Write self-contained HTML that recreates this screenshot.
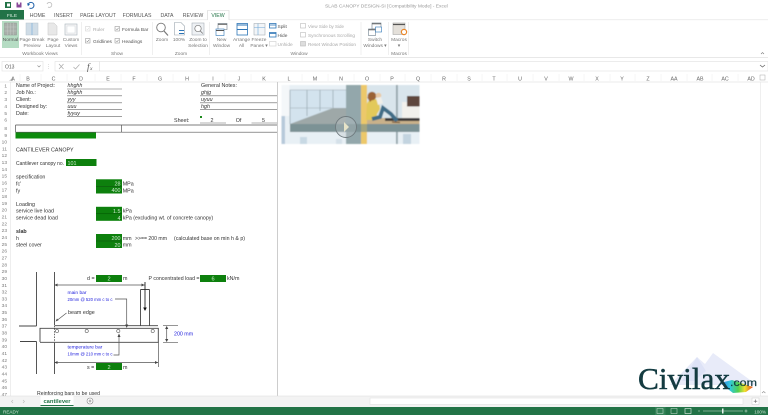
<!DOCTYPE html>
<html><head><meta charset="utf-8"><title>SLAB CANOPY DESIGN</title>
<style>
html,body{margin:0;padding:0;background:#fff;width:768px;height:415px;overflow:hidden}
svg{display:block;font-family:"Liberation Sans",sans-serif}
.rb{font-size:4.8px;fill:#555}
.rg{font-size:4.8px;fill:#aaa}
.gl{font-size:4.8px;fill:#777;text-anchor:middle}
.tab{font-size:5.2px;fill:#555;text-anchor:middle}
.c{font-size:5.3px;fill:#666;text-anchor:middle}
.r{font-size:4.8px;fill:#777;text-anchor:end}
.t{font-size:5.35px;fill:#333}
.i{font-size:5.35px;fill:#333;font-style:italic}
.w{font-size:5.4px;fill:#cfe8cf;text-anchor:end}
.wc{font-size:5.6px;fill:#cfe8cf;text-anchor:middle}
.b{font-size:4.9px;fill:#2222dd}
.ln{stroke:#555;stroke-width:.7;fill:none}
.lg{stroke:#444;stroke-width:.9;fill:none}
.blu{stroke:#2e75b6;stroke-width:.8;fill:#fff}
</style></head><body>
<svg width="768" height="415" viewBox="0 0 768 415" xmlns="http://www.w3.org/2000/svg">
<defs>
<linearGradient id="rain" x1="0" x2="1" y1="0" y2="0"><stop offset="0" stop-color="#3a6fe0"/><stop offset=".3" stop-color="#30c8e0"/><stop offset=".55" stop-color="#50d050"/><stop offset=".75" stop-color="#f0e030"/><stop offset="1" stop-color="#e84a20"/></linearGradient>
<filter id="s"><feGaussianBlur stdDeviation=".22"/></filter>
<filter id="s2"><feGaussianBlur stdDeviation=".5"/></filter>
<filter id="s3"><feGaussianBlur stdDeviation=".3"/></filter>
</defs>
<rect width="768" height="415" fill="#fff"/>
<g filter="url(#s)">
<!-- title bar -->
<rect x="5" y="2" width="6" height="6" fill="#217346"/><rect x="7" y="3.500" width="3" height="3" fill="#fff"/>
<path d="M16.500 2.500h5v5h-5z" fill="#8a4a9a"/><rect x="18" y="2.500" width="2" height="2" fill="#eee"/>
<path d="M28 5.500a3 3 0 1 1 1.500 2.500" fill="none" stroke="#1f5fa8" stroke-width="1"/><path d="M27 3l1 3 2-1.500z" fill="#1f5fa8"/>
<path d="M48 7a2.500 2.500 0 1 0-1-3" fill="none" stroke="#bbb" stroke-width=".8"/>
<text x="325" y="7.500" font-size="4.900" fill="#999">SLAB CANOPY DESIGN-SI  [Compatibility Mode] - Excel</text>
<!-- tabs -->
<rect x="0" y="10" width="24" height="10" fill="#217346"/>
<text x="12" y="17" font-size="4.800" fill="#d8eadf" text-anchor="middle">FILE</text>
<text x="37.500" y="17" class="tab">HOME</text>
<text x="63.500" y="17" class="tab">INSERT</text>
<text x="98" y="17" class="tab">PAGE LAYOUT</text>
<text x="137" y="17" class="tab">FORMULAS</text>
<text x="167" y="17" class="tab">DATA</text>
<text x="193" y="17" class="tab">REVIEW</text>
<path d="M207.500 20V10.500H229V20" fill="#fff" stroke="#d4d4d4" stroke-width=".6"/>
<text x="218" y="17" font-size="5.200" fill="#217346" text-anchor="middle">VIEW</text>
<path d="M0 19.800H207.500M229 19.800H768" stroke="#e2e2e2" stroke-width=".6"/>
<!-- ribbon group separators -->
<path d="M81.500 22v33M152.500 22v33M209.500 22v33M361 22v33M388.500 22v33M408.500 22v33" stroke="#e4e4e4" stroke-width=".6"/>
<path d="M0 57.500H768" stroke="#e8e8e8" stroke-width="1"/>
<!-- normal -->
<rect x="2" y="21" width="17" height="27" fill="#b5dcc3"/>
<rect x="4.500" y="23" width="12" height="12" fill="#a8aea9" stroke="#8d9590" stroke-width=".5"/>
<path d="M7.500 23v12M10.500 23v12M13.500 23v12M4.500 27h12M4.500 31h12" stroke="#c8cfc9" stroke-width=".4"/>
<text x="10.500" y="41" class="gl" style="fill:#555">Normal</text>
<!-- page break -->
<rect x="26" y="23" width="12" height="12" fill="#cfdce6" stroke="#b8c4cc" stroke-width=".5"/>
<path d="M32 23v12" stroke="#5b9bd5" stroke-width=".5"/>
<text x="32" y="41" class="gl">Page Break</text><text x="32" y="47" class="gl">Preview</text>
<path d="M48 23h6l3 3v9h-9z" fill="#e8e8e8" stroke="#c5c5c5" stroke-width=".5"/>
<text x="53" y="41" class="gl">Page</text><text x="53" y="47" class="gl">Layout</text>
<rect x="65" y="24" width="12" height="11" fill="#f4f4f4" stroke="#a8b4bc" stroke-width=".6"/><rect x="67" y="26" width="8" height="7" fill="#fff" stroke="#c8d0d6" stroke-width=".4"/>
<text x="71" y="41" class="gl">Custom</text><text x="71" y="47" class="gl">Views</text>
<text x="40" y="55" class="gl">Workbook Views</text>
<!-- show -->
<rect x="85.500" y="26.500" width="4.500" height="4.500" fill="#fff" stroke="#ccc" stroke-width=".5"/><path d="M86.500 28.800l1 1 1.600-2" stroke="#ccc" stroke-width=".5" fill="none"/>
<text x="93" y="31" class="rg">Ruler</text>
<rect x="85.500" y="38.500" width="4.500" height="4.500" fill="#fff" stroke="#888" stroke-width=".5"/><path d="M86.500 40.800l1 1 1.600-2" stroke="#555" stroke-width=".5" fill="none"/>
<text x="93" y="43" class="rb">Gridlines</text>
<rect x="115" y="26.500" width="4.500" height="4.500" fill="#fff" stroke="#888" stroke-width=".5"/><path d="M116 28.800l1 1 1.600-2" stroke="#555" stroke-width=".5" fill="none"/>
<text x="122" y="31" class="rb">Formula Bar</text>
<rect x="115" y="38.500" width="4.500" height="4.500" fill="#fff" stroke="#888" stroke-width=".5"/><path d="M116 40.800l1 1 1.600-2" stroke="#555" stroke-width=".5" fill="none"/>
<text x="122" y="43" class="rb">Headings</text>
<text x="117" y="55" class="gl">Show</text>
<!-- zoom -->
<circle cx="161" cy="27.500" r="4.300" fill="#fff" stroke="#777" stroke-width=".9"/><path d="M164 31l4 4.500" stroke="#777" stroke-width="1.200"/>
<text x="162" y="41" class="gl">Zoom</text>
<path d="M174.500 22.500h6.500l3.500 3.500v9h-10z" fill="#fff" stroke="#9aa5ad" stroke-width=".6"/><path d="M179 30.500h5M179 33.500h5" stroke="#2e75b6" stroke-width="1"/>
<text x="179" y="41" class="gl">100%</text>
<rect x="192" y="23" width="12" height="12" fill="#eef1f4" stroke="#a8b0b6" stroke-width=".6"/><circle cx="198" cy="28.500" r="3.200" fill="#fff" stroke="#777" stroke-width=".7"/><path d="M200.300 31l2.500 2.500" stroke="#777" stroke-width=".8"/>
<text x="198" y="41" class="gl">Zoom to</text><text x="198" y="47" class="gl">Selection</text>
<text x="181" y="55" class="gl">Zoom</text>
<!-- window -->
<rect x="218" y="23.500" width="9" height="6" fill="#fff" stroke="#6f7f8c" stroke-width=".6"/><rect x="216" y="29" width="8" height="6.500" fill="#fff" stroke="#2e75b6" stroke-width=".6"/><path d="M216 30.500h8M218 24.300h9" stroke="#555" stroke-width="1"/>
<text x="221.500" y="41" class="gl">New</text><text x="221.500" y="47" class="gl">Window</text>
<rect x="237" y="23.500" width="10.500" height="11.500" class="blu"/><path d="M237 25h10.500M237 29.500h10.500" stroke="#2e75b6" stroke-width="1"/>
<text x="241.500" y="41" class="gl">Arrange</text><text x="241.500" y="47" class="gl">All</text>
<rect x="254" y="23.500" width="11" height="11.500" fill="#f2f5f8" stroke="#a8b0b6" stroke-width=".6"/><path d="M258 23.500v11.500M254 27.500h11" stroke="#6fa8d8" stroke-width=".6"/>
<text x="259" y="41" class="gl">Freeze</text><text x="259" y="47" class="gl">Panes ▾</text>
<rect x="269.500" y="23.500" width="6.500" height="4.500" class="blu"/><path d="M269.500 25h6.500" stroke="#2e75b6" stroke-width=".8"/>
<text x="277.500" y="27.800" class="rb">Split</text>
<rect x="269.500" y="32.500" width="6.500" height="4.500" class="blu"/><path d="M269.500 33.500h6.500" stroke="#2e75b6" stroke-width=".8"/>
<text x="277.500" y="37" class="rb">Hide</text>
<rect x="269.500" y="41.500" width="6.500" height="4.500" fill="#fff" stroke="#ccc" stroke-width=".6"/>
<text x="277.500" y="46" class="rg">Unhide</text>
<rect x="300.500" y="23.500" width="5" height="4.500" fill="#fff" stroke="#bbb" stroke-width=".6"/>
<text x="308" y="27.800" class="rg" textLength="36" lengthAdjust="spacingAndGlyphs">View Side by Side</text>
<rect x="300.500" y="32.500" width="5" height="4.500" fill="#fff" stroke="#bbb" stroke-width=".6"/>
<text x="308" y="37" class="rg" textLength="47" lengthAdjust="spacingAndGlyphs">Synchronous Scrolling</text>
<rect x="300.500" y="41.500" width="5" height="4.500" fill="#ddd" stroke="#bbb" stroke-width=".6"/>
<text x="308" y="46" class="rg" textLength="48" lengthAdjust="spacingAndGlyphs">Reset Window Position</text>
<text x="299" y="55" class="gl">Window</text>
<rect x="372" y="23" width="9" height="6" fill="#fff" stroke="#6f7f8c" stroke-width=".6"/><rect x="368.500" y="29" width="7" height="6.500" fill="#fff" stroke="#6f7f8c" stroke-width=".6"/><rect x="375.500" y="27" width="6" height="5" fill="#fff" stroke="#2e75b6" stroke-width=".6"/><path d="M372 23.800h9M368.500 29.800h7" stroke="#555" stroke-width=".8"/>
<text x="375" y="41" class="gl">Switch</text><text x="375" y="47" class="gl">Windows ▾</text>
<rect x="393" y="23" width="12" height="11.500" fill="#e4e0da" stroke="#a8a8a8" stroke-width=".6"/><path d="M393 24.500h12" stroke="#555" stroke-width="1.200"/><circle cx="404" cy="32" r="2.600" fill="#fff" stroke="#e8862a" stroke-width="1.200"/>
<text x="399" y="41" class="gl">Macros</text><text x="399" y="47" class="gl">▾</text>
<text x="399" y="55" class="gl">Macros</text>
<path d="M761 54l1.500-1.500 1.500 1.500" stroke="#777" stroke-width=".6" fill="none"/>
<!-- formula bar -->
<rect x="2" y="61.500" width="41" height="9.500" fill="#fff" stroke="#e0e0e0" stroke-width=".6"/>
<text x="5" y="68.500" font-size="5" fill="#555">O13</text>
<path d="M37.500 65.500l1.500 1.500 1.500-1.500" stroke="#888" stroke-width=".6" fill="none"/>
<path d="M48.500 64v.5M48.500 66v.5M48.500 68v.5" stroke="#aaa" stroke-width=".7"/>
<rect x="55" y="61.500" width="713" height="9.500" fill="#fff" stroke="#e0e0e0" stroke-width=".6"/>
<path d="M59 64l4.500 5M63.500 64l-4.500 5" stroke="#aaa" stroke-width=".7"/>
<path d="M73.500 67l2 2 4-4.500" stroke="#aaa" stroke-width=".7" fill="none"/>
<text x="87" y="70" font-family="Liberation Serif" font-style="italic" font-size="9" fill="#555">f</text><text x="90" y="70" font-family="Liberation Serif" font-style="italic" font-size="5.500" fill="#555">x</text>
<path d="M99.500 61.500v9.500" stroke="#ddd" stroke-width=".6"/>
<path d="M760 65l2.500 2 2.500-2" stroke="#666" stroke-width=".8" fill="none"/>
<!-- column header -->
<path d="M0 82H768" stroke="#d8d8d8" stroke-width=".6"/>
<path d="M9 81l4-4v4z" fill="#ccc"/>
<g>
<text x="13" y="80.500" class="c">A</text><text x="28" y="80.500" class="c">B</text><text x="53.500" y="80.500" class="c">C</text><text x="81" y="80.500" class="c">D</text><text x="108" y="80.500" class="c">E</text><text x="134" y="80.500" class="c">F</text><text x="160" y="80.500" class="c">G</text><text x="187" y="80.500" class="c">H</text><text x="213" y="80.500" class="c">I</text><text x="239" y="80.500" class="c">J</text><text x="264" y="80.500" class="c">K</text><text x="289" y="80.500" class="c">L</text><text x="315" y="80.500" class="c">M</text><text x="341" y="80.500" class="c">N</text><text x="367" y="80.500" class="c">O</text><text x="392" y="80.500" class="c">P</text><text x="418" y="80.500" class="c">Q</text><text x="444" y="80.500" class="c">R</text><text x="469" y="80.500" class="c">S</text><text x="494" y="80.500" class="c">T</text><text x="520" y="80.500" class="c">U</text><text x="546" y="80.500" class="c">V</text><text x="571" y="80.500" class="c">W</text><text x="597" y="80.500" class="c">X</text><text x="622" y="80.500" class="c">Y</text><text x="648" y="80.500" class="c">Z</text><text x="674" y="80.500" class="c">AA</text><text x="700" y="80.500" class="c">AB</text><text x="725" y="80.500" class="c">AC</text><text x="751" y="80.500" class="c">AD</text>
</g>
<path d="M20 74v7M41 74v7M67 74v7M95 74v7M121 74v7M147 74v7M173 74v7M199 74v7M225 74v7M251 74v7M302 74v7M328 74v7M354 74v7M380 74v7M405 74v7M431 74v7M457 74v7M482 74v7M507 74v7M533 74v7M559 74v7M584 74v7M610 74v7M635 74v7M661 74v7M687 74v7M712 74v7M738 74v7" stroke="#eee" stroke-width=".5"/>
<rect x="760" y="75" width="5" height="5" fill="#fff" stroke="#aaa" stroke-width=".5"/>
<!-- row numbers -->
<path d="M10.500 82V396" stroke="#e2e2e2" stroke-width=".6"/>
<text x="7" y="87.300" class="r">1</text><text x="7" y="94" class="r">2</text><text x="7" y="101" class="r">3</text><text x="7" y="108" class="r">4</text><text x="7" y="115" class="r">5</text><text x="7" y="121.300" class="r">6</text><text x="7" y="130" class="r">8</text><text x="7" y="137" class="r">9</text>
<text x="7" y="143.500" class="r">10</text><text x="7" y="150.300" class="r">11</text><text x="7" y="157.200" class="r">12</text><text x="7" y="164" class="r">13</text><text x="7" y="170.800" class="r">14</text><text x="7" y="177.600" class="r">15</text><text x="7" y="184.500" class="r">16</text><text x="7" y="191.300" class="r">17</text><text x="7" y="198.100" class="r">18</text><text x="7" y="204.900" class="r">19</text><text x="7" y="211.700" class="r">20</text><text x="7" y="218.600" class="r">21</text><text x="7" y="225.400" class="r">22</text><text x="7" y="232.200" class="r">23</text><text x="7" y="239" class="r">24</text><text x="7" y="245.800" class="r">25</text><text x="7" y="252.700" class="r">26</text><text x="7" y="259.500" class="r">27</text><text x="7" y="266.300" class="r">28</text><text x="7" y="273.100" class="r">29</text><text x="7" y="280" class="r">30</text><text x="7" y="286.800" class="r">31</text><text x="7" y="293.600" class="r">32</text><text x="7" y="300.400" class="r">33</text><text x="7" y="307.200" class="r">34</text><text x="7" y="314.100" class="r">35</text><text x="7" y="320.900" class="r">36</text><text x="7" y="327.700" class="r">37</text><text x="7" y="334.500" class="r">38</text><text x="7" y="341.300" class="r">39</text><text x="7" y="348.200" class="r">40</text><text x="7" y="355" class="r">41</text><text x="7" y="361.800" class="r">42</text><text x="7" y="368.600" class="r">43</text><text x="7" y="375.400" class="r">44</text><text x="7" y="382.300" class="r">45</text><text x="7" y="389.100" class="r">46</text><text x="7" y="395.900" class="r">47</text>
<!-- header block -->
<text x="16" y="87" class="t" textLength="39" lengthAdjust="spacingAndGlyphs">Name of Project:</text><text x="67.500" y="87" class="i">hhghh</text>
<text x="16" y="94" class="t">Job No.:</text><text x="67.500" y="94" class="i">hhghh</text>
<text x="16" y="101" class="t">Client:</text><text x="67.500" y="101" class="i">yyy</text>
<text x="16" y="108" class="t">Designed by:</text><text x="67.500" y="108" class="i">uuu</text>
<text x="16" y="115" class="t">Date:</text><text x="67.500" y="115" class="i">fyyuy</text>
<path d="M67 89h55M67 95.800h55M67 102.800h55M67 109.300h55M67 116.300h55" stroke="#666" stroke-width=".6"/>
<text x="201" y="87" class="t">General Notes:</text>
<text x="201" y="94" class="i">ghjg</text><text x="201" y="101" class="i">uyuu</text><text x="201" y="108" class="i">hgh</text>
<path d="M200 95.800h77M200 102.800h77M200 109.300h77" stroke="#666" stroke-width=".6"/>
<text x="174" y="122" class="t">Sheet:</text><text x="212" y="122" class="t" text-anchor="middle">2</text><text x="235.700" y="122" class="t">Of</text><text x="263.500" y="122" class="t" text-anchor="middle">5</text>
<path d="M200 123h26M251.500 123h26" stroke="#666" stroke-width=".6"/>
<rect x="200" y="116" width="2" height="2" fill="#1a8a1a"/>
<path d="M15.500 125h261.500M15.500 132.200h261.500" stroke="#555" stroke-width=".7"/>
<path d="M15.500 125v7.200M121.500 125v7.200" stroke="#555" stroke-width=".7"/>
<rect x="15.500" y="132.500" width="80.500" height="6" fill="#0b8a0b"/>
<text x="16" y="151.500" class="t">CANTILEVER CANOPY</text>
<text x="16" y="165" class="t" textLength="48" lengthAdjust="spacingAndGlyphs">Cantilever canopy no.</text>
<rect x="66" y="159" width="30.500" height="7" fill="#0b800b"/>
<text x="67.500" y="165" font-size="5.400" fill="#cfe8cf">101</text>
<text x="16" y="178.500" class="t">specification</text>
<text x="16" y="185.300" class="t">fc'</text><text x="16" y="192.300" class="t">fy</text>
<rect x="96" y="179.300" width="26" height="14.200" fill="#0b800b"/><path d="M96 186.400h26" stroke="#064f06" stroke-width=".5"/>
<text x="120.500" y="185.300" class="w">28</text><text x="120.500" y="192.200" class="w">400</text>
<text x="122.700" y="185.300" class="t">MPa</text><text x="122.700" y="192.300" class="t">MPa</text>
<text x="16" y="205.800" class="t">Loading</text>
<text x="16" y="212.600" class="t">service live load</text><text x="16" y="219.400" class="t">service dead load</text>
<rect x="96" y="206.800" width="26" height="14" fill="#0b800b"/><path d="M96 213.800h26" stroke="#064f06" stroke-width=".5"/>
<text x="120.500" y="212.900" class="w">1.5</text><text x="120.500" y="219.800" class="w">4</text>
<text x="122.700" y="212.600" class="t">kPa</text><text x="122.700" y="219.400" class="t" textLength="90.500" lengthAdjust="spacingAndGlyphs">kPa (excluding wt. of concrete canopy)</text>
<text x="16" y="233" class="t" style="font-weight:bold">slab</text>
<text x="16" y="239.800" class="t">h</text><text x="16" y="246.700" class="t">steel cover</text>
<rect x="96" y="234" width="26" height="14" fill="#0b800b"/><path d="M96 241h26" stroke="#064f06" stroke-width=".5"/>
<text x="120.500" y="240.200" class="w">200</text><text x="120.500" y="247" class="w">20</text>
<text x="122.700" y="239.800" class="t">mm</text>
<text x="135" y="239.800" class="t" textLength="32" lengthAdjust="spacingAndGlyphs">&gt;&gt;== 200 mm</text>
<text x="174" y="239.800" class="t" textLength="71" lengthAdjust="spacingAndGlyphs">(calculated base on min h &amp; p)</text>
<text x="122.700" y="246.700" class="t">mm</text>
<!-- drawing -->
<path d="M36.500 272V326M36.500 341.500V374M54.500 272V325M54.500 343V374" class="lg"/>
<path d="M54.500 325.700v17" stroke="#444" stroke-width=".8" stroke-dasharray="1.500 1.200"/>
<path d="M19 326h17.500M20 341.500h16.500" class="lg"/>
<path d="M40 342V328.300H158.300V342.300H40M54.500 325.700H158M140.500 325.700V289.500M149.500 325.700V289.500M140.500 289.500h9" class="lg"/>
<path d="M158.500 342.300V367" class="ln"/>
<circle cx="57" cy="331" r="1.600" fill="#fff" stroke="#555" stroke-width=".6"/><circle cx="86.700" cy="331" r="1.600" fill="#fff" stroke="#555" stroke-width=".6"/><circle cx="118.300" cy="331" r="1.600" fill="#fff" stroke="#555" stroke-width=".6"/><circle cx="152.700" cy="331" r="1.600" fill="#fff" stroke="#555" stroke-width=".6"/>
<path d="M54.500 285h90" class="ln"/><path d="M54.500 285l3-1.500v3zM144.500 285l-3-1.500v3z" fill="#444"/>
<path d="M145 282v26" stroke="#222" stroke-width=".9"/><path d="M145 311l-1.800-3.500h3.600z" fill="#111"/>
<text x="87" y="280" class="t">d =</text><rect x="96" y="275" width="26" height="7" fill="#0b800b"/><text x="109" y="280.700" class="wc">2</text><text x="123" y="280" class="t">m</text>
<text x="148.500" y="280" class="t" textLength="51" lengthAdjust="spacingAndGlyphs">P concentrated load =</text><rect x="200" y="275" width="26" height="7" fill="#0b800b"/><text x="213" y="280.700" class="wc">6</text><text x="227" y="280" class="t">kN/m</text>
<text x="67.500" y="294" class="b">main bar</text><text x="67.500" y="301" class="b" textLength="45" lengthAdjust="spacingAndGlyphs">20mm @ 520 mm c to c</text>
<path d="M115 299h11.700V325" class="ln"/><path d="M126.700 328l-1.500-3.500h3z" fill="#444"/>
<text x="68" y="314" class="t">beam edge</text>
<path d="M66.500 313l-9 7" class="ln"/><path d="M55.500 321.500l1.500-3 1.500 1.800z" fill="#444"/>
<text x="67.500" y="348.500" class="b">temperature bar</text><text x="67.500" y="355.500" class="b" textLength="45" lengthAdjust="spacingAndGlyphs">10mm @ 210 mm c to c</text>
<path d="M113.500 355h5.500V336" class="ln"/><path d="M119 333.500l-1.500 3.500h3z" fill="#444"/>
<path d="M163 325.700h15M163 342.300h15M166.700 326.500v15" class="ln"/><path d="M166.700 326l-1.600 3h3.200zM166.700 342l-1.600-3h3.200z" fill="#444"/>
<text x="174" y="335.500" class="b" style="font-size:5.300px">200 mm</text>
<path d="M54.500 362.500h103.500" class="ln"/><path d="M54.500 362.500l3-1.500v3zM158 362.500l-3-1.500v3z" fill="#444"/>
<text x="87" y="369" class="t">s =</text><rect x="96" y="363" width="26" height="7" fill="#0b800b"/><text x="109" y="368.800" class="wc">2</text><text x="123" y="369" class="t">m</text>
<text x="37" y="395" class="t" textLength="63" lengthAdjust="spacingAndGlyphs">Reinforcing bars to be used</text>
<!-- freeze line -->
<path d="M277.500 82V396" stroke="#c8c8c8" stroke-width=".9"/>
</g>
<!-- picture -->
<g filter="url(#s2)">
<rect x="281.500" y="85" width="138" height="59" fill="#e8f0f5"/>
<rect x="281.500" y="85" width="8" height="31" fill="#f4f7f9"/>
<rect x="281.500" y="116" width="3.500" height="28" fill="#b7c9da"/>
<path d="M290 90H346V124H290z" fill="#d3e3ee"/>
<path d="M290 124L333 108H346V124z" fill="#9ea8a8"/>
<path d="M290 90h56M290 108h42" stroke="#aebcc5" stroke-width=".7"/>
<path d="M290 90v34M307 90v26M320 90v21M333 90v18" stroke="#9fb0ba" stroke-width=".9"/>
<rect x="346" y="85" width="15" height="59" fill="#93a7ab"/>
<rect x="361" y="85" width="6" height="59" fill="#ecc86a"/>
<rect x="367" y="85" width="52.500" height="38" fill="#d9e5ec"/>
<rect x="396" y="85" width="1.800" height="59" fill="#94a4aa"/>
<rect x="402" y="102" width="17.500" height="17" fill="#f2f1ec"/>
<rect x="407" y="96" width="12.500" height="10.500" fill="#5f463e"/>
<path d="M367 118h52.500v6H367z" fill="#c9b18a"/>
<path d="M385 118h34.500v3H385z" fill="#3e3a3a"/>
<rect x="290" y="124" width="129.500" height="8" fill="#7c9295"/>
<rect x="361" y="124" width="6" height="8" fill="#a3a47e"/>
<path d="M366 120l1-16c1-5 8-7 12-3l1 8-3 5-1 6z" fill="#e2c95a"/>
<circle cx="372" cy="96" r="4.300" fill="#9b6236"/><path d="M367 97l3 5 3-3z" fill="#9b6236"/>
<circle cx="378.500" cy="95.500" r="2.800" fill="#e8c9a6"/><path d="M376 98l5-1 2 6-5 2z" fill="#f0eee8"/>
<path d="M372 119l8-2 3-9 8 6 6 7" stroke="#3f6d87" stroke-width="3.800" fill="none"/>
<path d="M392 122l8 .5" stroke="#7a5a3a" stroke-width="1.300"/>
<rect x="300" y="137" width="7" height="7" fill="#c8d9e4"/><rect x="336" y="139" width="6" height="5" fill="#d5e1e9"/><rect x="403" y="134" width="8" height="10" fill="#c3d4e0"/>
</g>
<g filter="url(#s3)">
<circle cx="346" cy="127" r="10.500" fill="#b9c4c6" fill-opacity=".35" stroke="#6f7a7e" stroke-width=".9"/>
<path d="M344 122l5 5-5 5z" fill="#e6e3c8"/>
</g>
<!-- logo -->
<g filter="url(#s3)">
<path d="M670 385L697 357l8 7 8-11 44 32z" fill="#e6e9f8" opacity=".9"/>
<path d="M697 357l9 14-12 10h-12z" fill="#d9def5" opacity=".7"/>
<path d="M720 383l12-3 21 7-7 5-13 1z" fill="url(#rain)"/>
<text x="638" y="389" font-family="Liberation Serif" font-size="31" fill="#123a40" stroke="#123a40" stroke-width=".5" textLength="92" lengthAdjust="spacingAndGlyphs">Civilax</text>
<text x="730" y="386" font-family="Liberation Sans" font-size="10.500" fill="#123a40" stroke="#123a40" stroke-width=".2" textLength="27" lengthAdjust="spacingAndGlyphs">.com</text>
</g>
<g filter="url(#s)">
<!-- v scrollbar -->
<path d="M760.500 82V396" stroke="#e4e4e4" stroke-width=".6"/>
<path d="M762 393l1.700-1.500 1.700 1.500" stroke="#888" stroke-width=".6" fill="none"/>
<!-- sheet tab bar -->
<rect x="0" y="396" width="768" height="11" fill="#f3f3f3"/>
<path d="M0 396H768" stroke="#dcdcdc" stroke-width=".6"/>
<path d="M13 400l-1.500 1.500 1.500 1.500M23 400l1.500 1.500-1.500 1.500" stroke="#bbb" stroke-width=".6" fill="none"/>
<rect x="40.500" y="396" width="33" height="9.500" fill="#fff"/>
<path d="M40.500 405.500h33" stroke="#217346" stroke-width="1"/>
<text x="57" y="403" font-size="5.800" fill="#217346" text-anchor="middle" font-weight="bold">cantilever</text>
<circle cx="90" cy="401" r="3" fill="#fff" stroke="#888" stroke-width=".6"/><path d="M88.500 401h3M90 399.500v3" stroke="#666" stroke-width=".6"/>
<rect x="370" y="398" width="373" height="6.500" fill="#fff" stroke="#e2e2e2" stroke-width=".6"/>
<rect x="752" y="398" width="7" height="6.500" fill="#fff" stroke="#ccc" stroke-width=".5"/><path d="M753.700 401.200h3.600M755.500 399.500v3.400" stroke="#666" stroke-width=".6"/>
<!-- status -->
<rect x="0" y="407" width="768" height="8" fill="#217346"/>
<text x="3" y="413.300" font-size="4.600" fill="#cfe3d6">READY</text>
<rect x="655" y="407" width="10.500" height="8" fill="#3d8a60" opacity=".6"/>
<rect x="657" y="408.500" width="6" height="5" fill="none" stroke="#cfe3d6" stroke-width=".5"/>
<rect x="671" y="408.500" width="6" height="5" fill="none" stroke="#cfe3d6" stroke-width=".5"/>
<rect x="685" y="408.500" width="6" height="5" fill="none" stroke="#e8f2ec" stroke-width=".6"/>
<path d="M698 411h2M703 411h40M744.500 411h3M746 409.500v3" stroke="#cfe3d6" stroke-width=".6"/>
<rect x="722" y="408.500" width="1.500" height="5" fill="#e8f2ec"/>
<text x="766" y="413.300" font-size="4.600" fill="#cfe3d6" text-anchor="end">100%</text>
</g>
</svg>
</body></html>
